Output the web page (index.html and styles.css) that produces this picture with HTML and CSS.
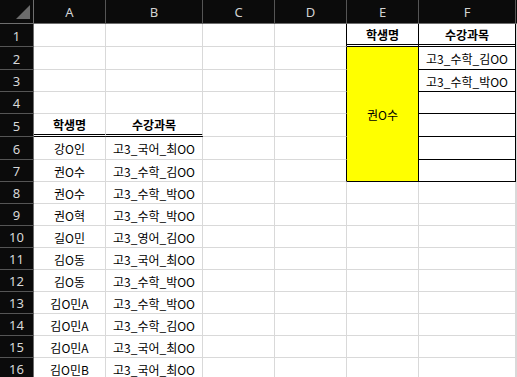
FILE: index.html
```html
<!DOCTYPE html>
<html lang="ko">
<head>
<meta charset="utf-8">
<title>Sheet</title>
<link rel="stylesheet" href="styles.css">
</head>
<body>
<div class="sheet">
  <div class="corner"><span class="tri"></span></div>
  <div class="colh">A</div><div class="colh">B</div><div class="colh">C</div><div class="colh">D</div><div class="colh">E</div><div class="colh">F</div><div class="colh last"></div>

  <div class="rowh">1</div><div class="c"></div><div class="c"></div><div class="c"></div><div class="c bR"></div><div class="c bR dbl hd">학생명</div><div class="c bR dbl hd">수강과목</div><div class="c"></div>

  <div class="rowh">2</div><div class="c"></div><div class="c"></div><div class="c"></div><div class="c bR"></div><div class="c merge">권O수</div><div class="c box">고3_수학_김OO</div><div class="c"></div>

  <div class="rowh">3</div><div class="c"></div><div class="c"></div><div class="c"></div><div class="c bR"></div><div class="c box">고3_수학_박OO</div><div class="c"></div>

  <div class="rowh">4</div><div class="c"></div><div class="c"></div><div class="c"></div><div class="c bR"></div><div class="c box"></div><div class="c"></div>

  <div class="rowh">5</div><div class="c dbl hd">학생명</div><div class="c dbl hd">수강과목</div><div class="c"></div><div class="c bR"></div><div class="c box"></div><div class="c"></div>

  <div class="rowh">6</div><div class="c">강O인</div><div class="c">고3_국어_최OO</div><div class="c"></div><div class="c bR"></div><div class="c box"></div><div class="c"></div>

  <div class="rowh">7</div><div class="c">권O수</div><div class="c">고3_수학_김OO</div><div class="c"></div><div class="c bR"></div><div class="c box"></div><div class="c"></div>

  <div class="rowh">8</div><div class="c">권O수</div><div class="c">고3_수학_박OO</div><div class="c"></div><div class="c"></div><div class="c"></div><div class="c"></div><div class="c"></div>

  <div class="rowh">9</div><div class="c">권O혁</div><div class="c">고3_수학_박OO</div><div class="c"></div><div class="c"></div><div class="c"></div><div class="c"></div><div class="c"></div>

  <div class="rowh">10</div><div class="c">길O민</div><div class="c">고3_영어_김OO</div><div class="c"></div><div class="c"></div><div class="c"></div><div class="c"></div><div class="c"></div>

  <div class="rowh">11</div><div class="c">김O동</div><div class="c">고3_국어_최OO</div><div class="c"></div><div class="c"></div><div class="c"></div><div class="c"></div><div class="c"></div>

  <div class="rowh">12</div><div class="c">김O동</div><div class="c">고3_수학_박OO</div><div class="c"></div><div class="c"></div><div class="c"></div><div class="c"></div><div class="c"></div>

  <div class="rowh">13</div><div class="c">김O민A</div><div class="c">고3_수학_박OO</div><div class="c"></div><div class="c"></div><div class="c"></div><div class="c"></div><div class="c"></div>

  <div class="rowh">14</div><div class="c">김O민A</div><div class="c">고3_수학_김OO</div><div class="c"></div><div class="c"></div><div class="c"></div><div class="c"></div><div class="c"></div>

  <div class="rowh">15</div><div class="c">김O민A</div><div class="c">고3_국어_최OO</div><div class="c"></div><div class="c"></div><div class="c"></div><div class="c"></div><div class="c"></div>

  <div class="rowh">16</div><div class="c">김O민B</div><div class="c">고3_국어_최OO</div><div class="c"></div><div class="c"></div><div class="c"></div><div class="c"></div><div class="c"></div>
</div>
</body>
</html>
```
FILE: styles.css
```css
html, body {
  margin: 0;
  padding: 0;
  background: #ffffff;
  overflow: hidden;
}
.sheet {
  display: grid;
  grid-template-columns: 34px 72px 97px 72px 72px 72px 97px 1fr;
  grid-template-rows: 24px 23px 23px 22px 22px 23px 23px 22px repeat(9, 22px);
  width: 517px;
  height: 377px;
  overflow: hidden;
  font-family: "Noto Sans CJK KR", "Noto Sans", sans-serif;
  font-size: 12px;
  color: #000;
}
.corner {
  background: #0b0b0b;
  border-right: 1px solid #6e6e6e;
  border-bottom: 1px solid #6e6e6e;
  box-sizing: border-box;
  display: flex;
  align-items: flex-end;
  justify-content: flex-end;
  padding: 0 3px 4px 0;
}
.tri {
  width: 0;
  height: 0;
  border-left: 14px solid transparent;
  border-bottom: 14px solid #6b6b6b;
}
.colh {
  background: #0b0b0b;
  color: #d2d2d2;
  font-family: "Noto Sans", "Liberation Sans", sans-serif;
  font-size: 13px;
  border-right: 1px solid #555555;
  border-bottom: 1px solid #6e6e6e;
  box-sizing: border-box;
  display: flex;
  align-items: center;
  justify-content: center;
}
.colh.last { border-right: none; }
.rowh {
  background: #0b0b0b;
  color: #d8d8d8;
  font-family: "Noto Sans", "Liberation Sans", sans-serif;
  font-size: 13px;
  border-right: 1px solid #6e6e6e;
  border-bottom: 1px solid #555555;
  box-sizing: border-box;
  display: flex;
  align-items: center;
  justify-content: center;
  padding-top: 1px;
}
.c {
  border-right: 1px solid #d9d9d9;
  border-bottom: 1px solid #d9d9d9;
  box-sizing: border-box;
  display: flex;
  align-items: center;
  justify-content: center;
  white-space: nowrap;
  padding-top: 1px;
}
.hd { font-weight: 700; }
.bR { border-right-color: #000; }
.dbl { border-bottom: 3px double #000; }
.merge {
  grid-row: span 6;
  background: #ffff00;
  border-right: 1px solid #000;
  border-bottom: 1px solid #000;
}
.box {
  border-right: 1px solid #000;
  border-bottom: 1px solid #000;
}
```
